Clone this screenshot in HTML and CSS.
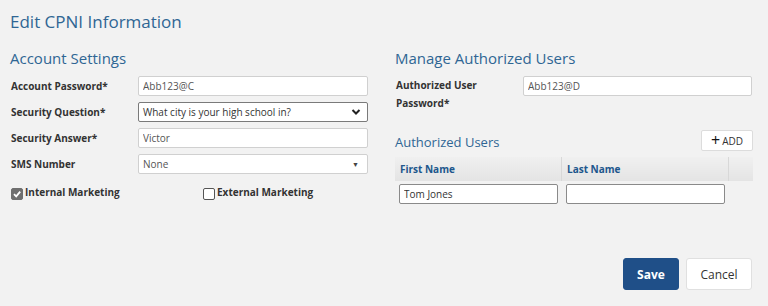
FILE: index.html
```html
<!DOCTYPE html>
<html lang="en">
<head>
    <meta charset="UTF-8">
    <title>Edit CPNI Information</title>
    <link rel="stylesheet" href="styles.css">
</head>
<body>
    <div class="page">
        <h1>Edit CPNI Information</h1>

        <div class="columns">
            <div class="col">
                <h2>Account Settings</h2>
                <div class="form">
                    <label>Account Password*</label>
                    <input class="field" type="text" value="Abb123@C">

                    <label>Security Question*</label>
                    <div class="field native-select">
                        <span>What city is your high school in?</span>
                        <svg width="10" height="8" viewBox="0 0 10 8"><path d="M1.5 2 L5 5.5 L8.5 2" fill="none" stroke="#222" stroke-width="2"/></svg>
                    </div>

                    <label>Security Answer*</label>
                    <input class="field" type="text" value="Victor">

                    <label>SMS Number</label>
                    <div class="field dropdown">
                        <span>None</span>
                        <span class="caret">&#9660;</span>
                    </div>
                </div>

                <div class="checks">
                    <label class="check"><span class="box checked"><svg width="10" height="10" viewBox="0 0 10 10"><path d="M2 5.2 L4.2 7.4 L8.2 2.6" fill="none" stroke="#fff" stroke-width="1.8"/></svg></span>Internal Marketing</label>
                    <label class="check"><span class="box"></span>External Marketing</label>
                </div>
            </div>

            <div class="col">
                <h2>Manage Authorized Users</h2>
                <div class="form">
                    <label class="tall">Authorized User Password*</label>
                    <input class="field" type="text" value="Abb123@D">
                </div>

                <div class="users-head">
                    <h3>Authorized Users</h3>
                    <button class="add"><span class="plus">+</span>ADD</button>
                </div>

                <table class="users">
                    <thead>
                        <tr>
                            <th class="first">First Name</th>
                            <th class="last">Last Name</th>
                            <th class="spare"></th>
                        </tr>
                    </thead>
                    <tbody>
                        <tr>
                            <td><input class="cell" type="text" value="Tom Jones"></td>
                            <td><input class="cell" type="text" value=""></td>
                            <td></td>
                        </tr>
                    </tbody>
                </table>
            </div>
        </div>

        <div class="actions">
            <button class="btn save">Save</button>
            <button class="btn cancel">Cancel</button>
        </div>
    </div>
</body>
</html>
```

FILE: styles.css
```css
html, body {
    margin: 0;
    background: #f2f2f2;
}
body {
    font-family: 'Open Sans', Arial, sans-serif;
    color: #333;
    width: 768px;
    height: 306px;
    overflow: hidden;
}
.page {
    padding: 10px 16px 0 10px;
}
h1 {
    margin: 0;
    font-size: 17px;
    font-weight: 400;
    color: #2f6694;
    line-height: 24px;
}
h2 {
    margin: 14px 0 0 0;
    font-size: 15px;
    font-weight: 400;
    color: #2f6694;
    line-height: 20px;
}
h3 {
    margin: 0;
    font-size: 13px;
    font-weight: 400;
    color: #2f6694;
    line-height: 18px;
}
.columns {
    display: grid;
    grid-template-columns: 358px 357px;
    column-gap: 27px;
}
.form {
    display: grid;
    grid-template-columns: 128px 1fr;
    row-gap: 6px;
    margin-top: 8px;
    align-items: start;
}
.form label {
    font-size: 10px;
    font-weight: 700;
    color: #333;
    line-height: 20px;
    padding-left: 1px;
}
.form label.tall {
    line-height: 18px;
    width: 100px;
}
.field {
    box-sizing: border-box;
    height: 20px;
    margin: 0;
    padding: 0 4px;
    border: 1px solid #d0d0d0;
    border-radius: 2px;
    background: #fff;
    font-family: inherit;
    font-size: 10px;
    color: #555;
    width: 100%;
}
.native-select {
    display: flex;
    align-items: center;
    justify-content: space-between;
    border-color: #7a7a7a;
    color: #333;
    padding-right: 6px;
}
.dropdown {
    display: flex;
    align-items: center;
    justify-content: space-between;
    padding-right: 8px;
}
.caret {
    font-size: 7px;
    color: #444;
}
.checks {
    display: grid;
    grid-template-columns: 192px 1fr;
    margin-top: 11px;
}
.check {
    display: flex;
    align-items: flex-start;
    font-size: 10px;
    font-weight: 700;
    color: #333;
    line-height: 14px;
}
.box {
    box-sizing: border-box;
    width: 12px;
    height: 12px;
    margin: 3px 2px 0 1px;
    border: 1px solid #555;
    border-radius: 2px;
    background: #fff;
    display: flex;
    align-items: center;
    justify-content: center;
}
.box.checked {
    background: #6f6f6f;
    border-color: #6f6f6f;
}
.users-head {
    display: flex;
    justify-content: space-between;
    align-items: center;
    margin-top: 18px;
    margin-right: -1px;
}
.users-head h3 {
    margin-top: 3px;
}
.add {
    box-sizing: border-box;
    height: 21px;
    width: 52px;
    border: 1px solid #dcdcdc;
    border-radius: 2px;
    background: #fff;
    font-family: inherit;
    font-size: 10px;
    color: #333;
    padding: 0;
    display: flex;
    align-items: center;
    justify-content: center;
}
.plus {
    font-size: 16px;
    font-weight: 400;
    color: #111;
    line-height: 1;
    margin-right: 2px;
    margin-top: -2px;
}
.users {
    width: 358px;
    border-collapse: collapse;
    margin-top: 6px;
}
.users th {
    height: 24px;
    padding: 0 0 0 5px;
    text-align: left;
    font-size: 10px;
    font-weight: 700;
    color: #20568c;
    background: linear-gradient(#f0f0f0, #e4e4e4);
    border-right: 1px solid #d8d8d8;
}
.users th.first { width: 161px; }
.users th.last { width: 161px; }
.users th.spare { border-right: 0; }
.users td {
    padding: 3px 0 0 4px;
    vertical-align: top;
}
.cell {
    display: block;
    box-sizing: border-box;
    width: 159px;
    height: 20px;
    margin: 0;
    padding: 0 4px;
    border: 1px solid #8a8a8a;
    border-radius: 2px;
    background: #fff;
    font-family: inherit;
    font-size: 10px;
    color: #333;
}
.actions {
    display: flex;
    justify-content: flex-end;
    gap: 7px;
    margin-top: 54px;
}
.btn {
    box-sizing: border-box;
    height: 32px;
    border-radius: 3px;
    font-family: inherit;
    font-size: 12px;
    cursor: pointer;
}
.save {
    width: 56px;
    background: #1f4f88;
    border: 1px solid #1f4f88;
    color: #fff;
    font-weight: 700;
}
.cancel {
    width: 66px;
    background: #fff;
    border: 1px solid #e0e0e0;
    color: #333;
}
```
